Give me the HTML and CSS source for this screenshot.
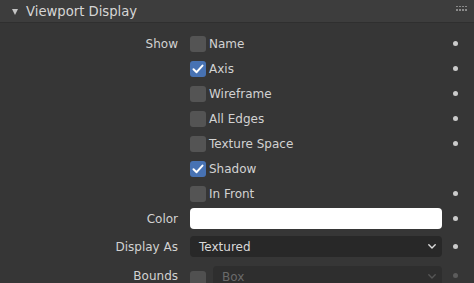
FILE: index.html
```html
<!DOCTYPE html>
<html>
<head>
    <title>Viewport Display</title>
    <link rel="stylesheet" href="styles.css">
</head>
<body>
    <div class="panel">
        <div class="panel-header">
            <span class="arrow"></span>
            <span class="title">Viewport Display</span>
            <span class="grip">
                <i></i><i></i><i></i><i></i>
                <i></i><i></i><i></i><i></i>
            </span>
        </div>

        <div class="panel-body">
            <div class="row check-row">
                <div class="label">Show</div>
                <div class="control"><span class="box"></span><span class="text">Name</span></div>
                <div class="anim"><span class="dot"></span></div>
            </div>
            <div class="row check-row">
                <div class="label"></div>
                <div class="control"><span class="box on"><svg viewBox="0 0 16 16"><path d="M3.5 8.3 L6.6 11.2 L12.5 4.6" /></svg></span><span class="text">Axis</span></div>
                <div class="anim"><span class="dot"></span></div>
            </div>
            <div class="row check-row">
                <div class="label"></div>
                <div class="control"><span class="box"></span><span class="text">Wireframe</span></div>
                <div class="anim"><span class="dot"></span></div>
            </div>
            <div class="row check-row">
                <div class="label"></div>
                <div class="control"><span class="box"></span><span class="text">All Edges</span></div>
                <div class="anim"><span class="dot"></span></div>
            </div>
            <div class="row check-row">
                <div class="label"></div>
                <div class="control"><span class="box"></span><span class="text">Texture Space</span></div>
                <div class="anim"><span class="dot"></span></div>
            </div>
            <div class="row check-row">
                <div class="label"></div>
                <div class="control"><span class="box on"><svg viewBox="0 0 16 16"><path d="M3.5 8.3 L6.6 11.2 L12.5 4.6" /></svg></span><span class="text">Shadow</span></div>
                <div class="anim"></div>
            </div>
            <div class="row check-row">
                <div class="label"></div>
                <div class="control"><span class="box"></span><span class="text">In Front</span></div>
                <div class="anim"><span class="dot"></span></div>
            </div>

            <div class="row field-row first">
                <div class="label">Color</div>
                <div class="control"><div class="color-field"></div></div>
                <div class="anim"><span class="dot"></span></div>
            </div>
            <div class="row field-row">
                <div class="label">Display As</div>
                <div class="control">
                    <div class="select">
                        <span>Textured</span>
                        <svg class="chev" viewBox="0 0 8 5"><path d="M0.8 0.8 L4 4 L7.2 0.8" /></svg>
                    </div>
                </div>
                <div class="anim"><span class="dot"></span></div>
            </div>
            <div class="row field-row">
                <div class="label">Bounds</div>
                <div class="control">
                    <span class="box dim"></span>
                    <div class="select disabled">
                        <span>Box</span>
                        <svg class="chev" viewBox="0 0 8 5"><path d="M0.8 0.8 L4 4 L7.2 0.8" /></svg>
                    </div>
                </div>
                <div class="anim"><span class="dot dim"></span></div>
            </div>
        </div>
    </div>
</body>
</html>
```

FILE: styles.css
```css
body {
    margin: 0;
    background: #363636;
    font-family: "DejaVu Sans", Verdana, sans-serif;
    color: #d2d2d2;
    overflow: hidden;
}

.panel-header {
    display: flex;
    align-items: center;
    height: 22px;
    background: #3d3d3d;
    border-bottom: 1px solid #2f2f2f;
}

.arrow {
    width: 0;
    height: 0;
    margin-left: 12px;
    margin-top: 1px;
    border-left: 3.5px solid transparent;
    border-right: 3.5px solid transparent;
    border-top: 6px solid #c4c4c4;
}

.title {
    margin-left: 8px;
    font-size: 13.2px;
    color: #d6d6d6;
}

.grip {
    margin-left: auto;
    margin-right: 7px;
    width: 11px;
    display: grid;
    grid-template-columns: repeat(4, 1.5px);
    column-gap: 1.5px;
    row-gap: 2px;
    margin-top: -6px;
}

.grip i {
    display: block;
    width: 1.5px;
    height: 1.5px;
    background: #8a8a8a;
}

.panel-body {
    padding-top: 8px;
}

.row {
    display: grid;
    grid-template-columns: 190px 252px 26px;
    align-items: center;
    font-size: 12px;
}

.check-row {
    height: 25px;
}

.field-row {
    height: 21px;
    margin-bottom: 7px;
}

.field-row.first {
    margin-top: 2px;
}

.label {
    text-align: right;
    padding-right: 12px;
}

.control {
    display: flex;
    align-items: center;
    height: 100%;
}

.box {
    width: 16px;
    height: 16px;
    border-radius: 3px;
    background: #545454;
    flex: none;
}

.box.on {
    background: #4772b3;
}

.box svg {
    display: block;
    width: 16px;
    height: 16px;
}

.box svg path {
    fill: none;
    stroke: #ffffff;
    stroke-width: 2;
    stroke-linecap: round;
    stroke-linejoin: round;
}

.box.dim {
    background: #505050;
    margin-top: 6px;
}

.text {
    margin-left: 3px;
}

.anim {
    display: flex;
    justify-content: center;
    align-items: center;
}

.dot {
    width: 5px;
    height: 5px;
    border-radius: 50%;
    background: #cbcbcb;
}

.dot.dim {
    background: #5c5c5c;
}

.color-field {
    width: 100%;
    height: 21px;
    background: #ffffff;
    border-radius: 4px;
}

.select {
    flex: 1;
    height: 21px;
    display: flex;
    align-items: center;
    padding: 0 6px 0 9px;
    background: #282828;
    border-radius: 4px;
    color: #d8d8d8;
}

.chev {
    margin-left: auto;
    width: 8px;
    height: 5px;
}

.chev path {
    fill: none;
    stroke: #dcdcdc;
    stroke-width: 1.4;
    stroke-linecap: round;
    stroke-linejoin: round;
}

.select.disabled {
    margin-left: 7px;
    margin-top: 2px;
    background: #2e2e2e;
    color: #6a6a6a;
}

.select.disabled .chev path {
    stroke: #555555;
}
```
